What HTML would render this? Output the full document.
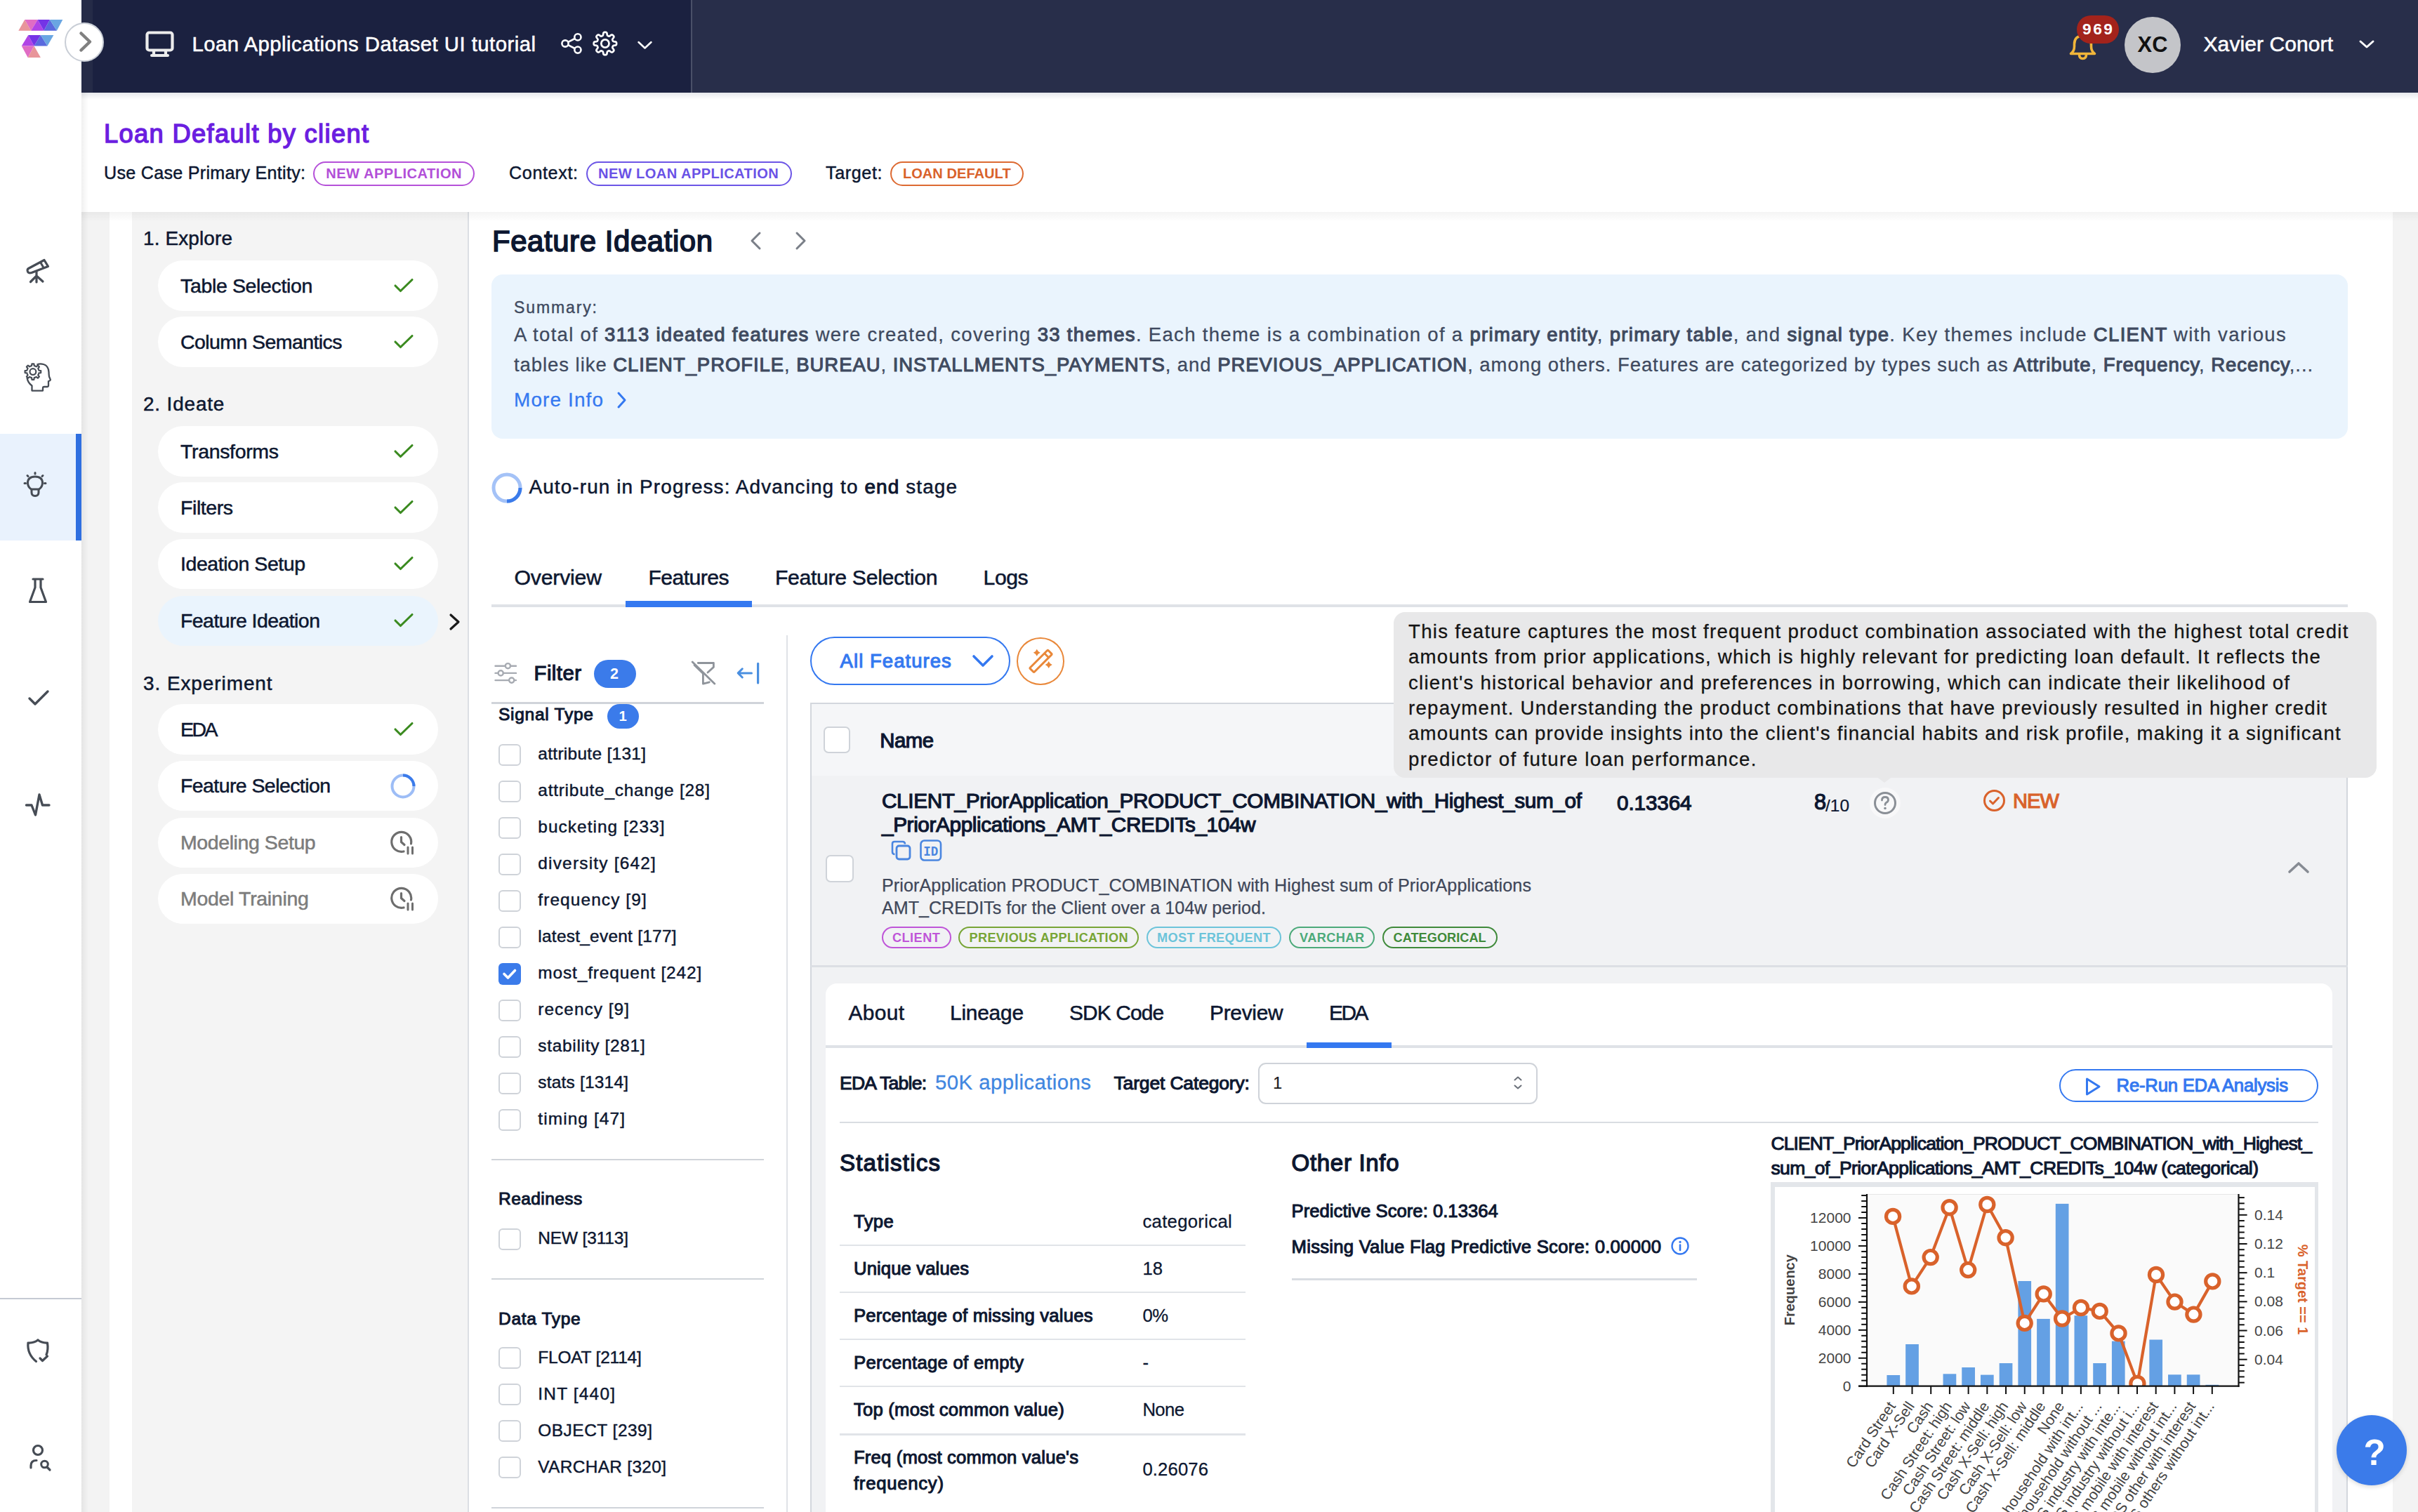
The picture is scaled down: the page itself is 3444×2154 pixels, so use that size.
<!DOCTYPE html><html><head><meta charset="utf-8"><style>
*{margin:0;padding:0}
html,body{width:3444px;height:2154px;overflow:hidden;background:#f3f3f3}
body{position:relative;font-family:"Liberation Sans",sans-serif}
.a{position:absolute}
.t{position:absolute;white-space:nowrap;line-height:1em}
b{font-weight:400;-webkit-text-stroke:1.1px currentColor}
</style></head><body>
<div class="a" style="left:0.0px;top:0.0px;width:3444.0px;height:2154.0px;background:#f3f3f3;"></div>
<div class="a" style="left:0.0px;top:0.0px;width:116.0px;height:2154.0px;background:#fff;"></div>
<div class="a" style="left:116.0px;top:0.0px;width:3328.0px;height:132.0px;background:#282e4a;"></div>
<div class="a" style="left:116.0px;top:0.0px;width:868.0px;height:132.0px;background:#1b2140;"></div>
<div class="a" style="left:116.0px;top:0.0px;width:16.0px;height:132.0px;background:#252b47;"></div>
<div class="a" style="left:984.0px;top:0.0px;width:2.0px;height:132.0px;background:#4a5068;"></div>
<div class="a" style="left:116.0px;top:132.0px;width:3328.0px;height:170.0px;background:#fff;"></div>
<div class="a" style="left:116.0px;top:132.0px;width:3328.0px;height:10.0px;background:linear-gradient(#e6e8ec,#ffffff);"></div>
<div class="a" style="left:156.0px;top:302.0px;width:3252.0px;height:1852.0px;background:#fff;"></div>
<div class="a" style="left:188.0px;top:302.0px;width:479.0px;height:1852.0px;background:#f4f4f4;"></div>
<div class="a" style="left:666.0px;top:302.0px;width:2.0px;height:1852.0px;background:#dcdfe4;"></div>
<div class="a" style="left:116.0px;top:302.0px;width:3328.0px;height:14.0px;background:linear-gradient(rgba(0,0,0,0.045),rgba(0,0,0,0));"></div>
<div class="a" style="left:116.0px;top:132.0px;width:10.0px;height:2022.0px;background:linear-gradient(90deg,rgba(0,0,0,0.06),rgba(0,0,0,0));"></div>
<svg class="a" style="left:0;top:0" width="116" height="110" viewBox="0 0 116 110">
<polygon points="26.3,43.7 35.2,28.1 44.2,43.7" fill="#e8959a"/>
<polygon points="35.2,28.1 53.6,28.1 44.2,43.7" fill="#e06cc4"/>
<polygon points="44.2,43.7 53.6,28.1 62.5,43.7" fill="#b044e6"/>
<polygon points="53.6,28.1 71,28.1 62.5,43.7" fill="#7434e6"/>
<polygon points="62.5,43.7 71,28.1 80.9,43.7" fill="#5a6ade"/>
<polygon points="71,28.1 89.3,28.1 80.9,43.7" fill="#6aa6e2"/>
<polygon points="30.8,65.5 40.2,50.1 48.6,65.5" fill="#b044e6"/>
<polygon points="40.2,50.1 58,50.1 48.6,65.5" fill="#7434e6"/>
<polygon points="48.6,65.5 58,50.1 67.5,65.5" fill="#5a6ade"/>
<polygon points="58,50.1 76.4,50.1 67.5,65.5" fill="#6aa6e2"/>
<polygon points="30.8,65.5 48.6,65.5 39.7,81.9" fill="#e06cc4"/>
<polygon points="48.6,65.5 57.9,81.9 39.7,81.9" fill="#e8959a"/>
</svg>
<div class="a" style="left:92px;top:32px;width:52px;height:52px;border-radius:50%;background:#fff;border:2px solid #c9ced6;"></div>
<svg class="a" style="left:108px;top:44px" width="30" height="32" viewBox="0 0 30 32"><path d="M7.5 3.5 L20 15.5 L7.5 27.5" fill="none" stroke="#808080" stroke-width="4.5" stroke-linecap="round" stroke-linejoin="round"/></svg>
<svg class="a" style="left:206px;top:43px" width="44" height="40" viewBox="0 0 44 40"><rect x="3.5" y="3.5" width="36" height="25" rx="3" fill="none" stroke="#ececec" stroke-width="4.2"/><path d="M13 29 v6 M30 29 v6" stroke="#ececec" stroke-width="4.2"/><path d="M10 36 h23" stroke="#ececec" stroke-width="4" stroke-linecap="round"/></svg>
<div class="t" id="t1" style="left:273.4px;top:48.4px;font-size:29.33px;font-weight:400;color:#ffffff;-webkit-text-stroke:0.53px currentColor;letter-spacing:0.467px;">Loan Applications Dataset UI tutorial</div>
<svg class="a" style="left:790px;top:40px" width="100" height="45" viewBox="790 40 100 45">
<circle cx="822.9" cy="52.9" r="4.6" fill="none" stroke="#fff" stroke-width="2.6"/><circle cx="805" cy="62" r="4.6" fill="none" stroke="#fff" stroke-width="2.6"/><circle cx="822.9" cy="71.1" r="4.6" fill="none" stroke="#fff" stroke-width="2.6"/>
<path d="M809.2 59.8 L818.7 55 M809.2 64.2 L818.7 69" stroke="#fff" stroke-width="2.6"/>
<path d="M861.90 45.80 L862.54 45.83 L863.17 45.92 L863.77 46.18 L864.29 46.89 L864.61 48.37 L864.82 49.84 L865.12 50.57 L865.51 50.90 L865.92 51.10 L866.34 51.28 L866.76 51.45 L867.20 51.60 L867.70 51.64 L868.43 51.34 L869.62 50.44 L870.89 49.63 L871.76 49.49 L872.37 49.74 L872.89 50.11 L873.36 50.54 L873.79 51.01 L874.16 51.53 L874.41 52.14 L874.27 53.01 L873.46 54.28 L872.56 55.47 L872.26 56.20 L872.30 56.70 L872.45 57.14 L872.62 57.56 L872.80 57.98 L873.00 58.39 L873.33 58.78 L874.06 59.08 L875.53 59.29 L877.01 59.61 L877.72 60.13 L877.98 60.73 L878.07 61.36 L878.10 62.00 L878.07 62.64 L877.98 63.27 L877.72 63.87 L877.01 64.39 L875.53 64.71 L874.06 64.92 L873.33 65.22 L873.00 65.61 L872.80 66.02 L872.62 66.44 L872.45 66.86 L872.30 67.30 L872.26 67.80 L872.56 68.53 L873.46 69.72 L874.27 70.99 L874.41 71.86 L874.16 72.47 L873.79 72.99 L873.36 73.46 L872.89 73.89 L872.37 74.26 L871.76 74.51 L870.89 74.37 L869.62 73.56 L868.43 72.66 L867.70 72.36 L867.20 72.40 L866.76 72.55 L866.34 72.72 L865.92 72.90 L865.51 73.10 L865.12 73.43 L864.82 74.16 L864.61 75.63 L864.29 77.11 L863.77 77.82 L863.17 78.08 L862.54 78.17 L861.90 78.20 L861.26 78.17 L860.63 78.08 L860.03 77.82 L859.51 77.11 L859.19 75.63 L858.98 74.16 L858.68 73.43 L858.29 73.10 L857.88 72.90 L857.46 72.72 L857.04 72.55 L856.60 72.40 L856.10 72.36 L855.37 72.66 L854.18 73.56 L852.91 74.37 L852.04 74.51 L851.43 74.26 L850.91 73.89 L850.44 73.46 L850.01 72.99 L849.64 72.47 L849.39 71.86 L849.53 70.99 L850.34 69.72 L851.24 68.53 L851.54 67.80 L851.50 67.30 L851.35 66.86 L851.18 66.44 L851.00 66.02 L850.80 65.61 L850.47 65.22 L849.74 64.92 L848.27 64.71 L846.79 64.39 L846.08 63.87 L845.82 63.27 L845.73 62.64 L845.70 62.00 L845.73 61.36 L845.82 60.73 L846.08 60.13 L846.79 59.61 L848.27 59.29 L849.74 59.08 L850.47 58.78 L850.80 58.39 L851.00 57.98 L851.18 57.56 L851.35 57.14 L851.50 56.70 L851.54 56.20 L851.24 55.47 L850.34 54.28 L849.53 53.01 L849.39 52.14 L849.64 51.53 L850.01 51.01 L850.44 50.54 L850.91 50.11 L851.43 49.74 L852.04 49.49 L852.91 49.63 L854.18 50.44 L855.37 51.34 L856.10 51.64 L856.60 51.60 L857.04 51.45 L857.46 51.28 L857.88 51.10 L858.29 50.90 L858.68 50.57 L858.98 49.84 L859.19 48.37 L859.51 46.89 L860.03 46.18 L860.63 45.92 L861.26 45.83 L861.90 45.80 Z" fill="none" stroke="#fff" stroke-width="2.7" stroke-linejoin="round"/>
<circle cx="861.9" cy="62" r="5.6" fill="none" stroke="#fff" stroke-width="2.7"/></svg>
<svg class="a" style="left:905px;top:55px" width="26" height="18" viewBox="0 0 26 18"><path d="M4.5 5 L13.5 13.5 L22.5 5" fill="none" stroke="#fff" stroke-width="2.5" stroke-linecap="round" stroke-linejoin="round"/></svg>
<svg class="a" style="left:2945px;top:46px" width="42" height="42" viewBox="0 0 42 42">
<path d="M4.5 30.5 Q9.5 27 9.5 20 V17 Q9.5 5 21.5 5 Q33.5 5 33.5 17 V20 Q33.5 27 38.5 30.5 Z" fill="none" stroke="#f0b53a" stroke-width="3.6" stroke-linejoin="round"/>
<path d="M16.5 31.5 Q16.5 37.5 21.5 37.5 Q26.5 37.5 26.5 31.5" fill="none" stroke="#f0b53a" stroke-width="3.6"/></svg>
<div class="a" style="left:2958px;top:22px;width:60px;height:40px;border-radius:20px;background:#a3231b;"></div>
<div class="t" id="t2" style="left:2966.0px;top:30.2px;font-size:22.77px;font-weight:700;color:#fff;letter-spacing:2.508px;">969</div>
<div class="a" style="left:3026px;top:24px;width:80px;height:80px;border-radius:50%;background:#c4c5c9;"></div>
<div class="t" id="t3" style="left:3044.5px;top:48.5px;font-size:30.73px;font-weight:700;color:#111;letter-spacing:0.312px;">XC</div>
<div class="t" id="t4" style="left:3138.5px;top:48.4px;font-size:30.03px;font-weight:400;color:#fff;-webkit-text-stroke:0.54px currentColor;letter-spacing:0.082px;">Xavier Conort</div>
<svg class="a" style="left:3358px;top:53px" width="26" height="20" viewBox="0 0 26 20"><path d="M4 6 L13 14 L22 6" fill="none" stroke="#fff" stroke-width="3" stroke-linecap="round" stroke-linejoin="round"/></svg>
<div class="t" id="t5" style="left:148.0px;top:173.3px;font-size:36.31px;font-weight:400;color:#6b1ee0;-webkit-text-stroke:1.45px currentColor;letter-spacing:1.330px;">Loan Default by client</div>
<div class="t" id="t6" style="left:148.0px;top:234.3px;font-size:25.14px;font-weight:400;color:#0d1730;-webkit-text-stroke:0.45px currentColor;letter-spacing:0.276px;">Use Case Primary Entity:</div>
<div class="a" style="left:446px;top:229.5px;width:230px;height:35px;box-sizing:border-box;border-radius:18px;border:2.5px solid #b551d9;"></div>
<div class="t" id="t7" style="left:464.2px;top:237.2px;font-size:20.11px;font-weight:700;color:#b24fd8;letter-spacing:0.488px;">NEW APPLICATION</div>
<div class="t" id="t8" style="left:725.0px;top:234.3px;font-size:25.14px;font-weight:400;color:#0d1730;-webkit-text-stroke:0.45px currentColor;letter-spacing:0.632px;">Context:</div>
<div class="a" style="left:834.6px;top:229.5px;width:293px;height:35px;box-sizing:border-box;border-radius:18px;border:2.5px solid #6c55e6;"></div>
<div class="t" id="t9" style="left:852.0px;top:237.2px;font-size:20.11px;font-weight:700;color:#6a52e6;letter-spacing:0.404px;">NEW LOAN APPLICATION</div>
<div class="t" id="t10" style="left:1176.0px;top:234.3px;font-size:25.14px;font-weight:400;color:#0d1730;-webkit-text-stroke:0.45px currentColor;letter-spacing:0.615px;">Target:</div>
<div class="a" style="left:1268px;top:229.5px;width:190px;height:35px;box-sizing:border-box;border-radius:18px;border:2.5px solid #dd6a32;"></div>
<div class="t" id="t11" style="left:1285.9px;top:237.2px;font-size:20.11px;font-weight:700;color:#d9622b;">LOAN DEFAULT</div>
<div class="a" style="left:0.0px;top:618.0px;width:116.0px;height:152.0px;background:#e9f2fd;"></div>
<div class="a" style="left:108.0px;top:618.0px;width:8.0px;height:152.0px;background:#2f6fe0;"></div>
<svg class="a" style="left:34px;top:366px" width="40" height="40" viewBox="0 0 40 40">
<path d="M6.5 16.5 L29 4.5 L34.5 13.5 L11 22.5 Q6 24 5.2 20 Q4.8 17.5 6.5 16.5 Z" fill="none" stroke="#464c55" stroke-width="3.2" stroke-linejoin="round"/>
<path d="M23.5 7.5 L28.5 16" stroke="#464c55" stroke-width="3"/>
<path d="M18 21 L18 36 M18 27 L9.5 35.5 M18 27 L27 35" stroke="#464c55" stroke-width="3.2" stroke-linecap="round"/></svg>
<svg class="a" style="left:30px;top:512px" width="48" height="50" viewBox="0 0 48 50">
<path d="M8.5 26 Q9.5 33 15.5 37.5 V44.6 H31 V41 Q31 39 33 39 H37 Q39 39 39 37 V31 L40.5 30.5 Q42.5 29.5 41.5 28 L40 24.5 Q39.5 21 39.5 18 Q39 9 32 7 Q27 5.5 22.5 7.5" fill="none" stroke="#464c55" stroke-width="2.3" stroke-linejoin="round"/>
<path d="M25.40 15.74 L28.20 16.13 L28.20 19.07 L25.40 19.46 L24.94 20.93 L24.23 22.29 L25.94 24.55 L23.85 26.64 L21.59 24.93 L20.23 25.64 L18.76 26.10 L18.37 28.90 L15.43 28.90 L15.04 26.10 L13.57 25.64 L12.21 24.93 L9.95 26.64 L7.86 24.55 L9.57 22.29 L8.86 20.93 L8.40 19.46 L5.60 19.07 L5.60 16.13 L8.40 15.74 L8.86 14.27 L9.57 12.91 L7.86 10.65 L9.95 8.56 L12.21 10.27 L13.57 9.56 L15.04 9.10 L15.43 6.30 L18.37 6.30 L18.76 9.10 L20.23 9.56 L21.59 10.27 L23.85 8.56 L25.94 10.65 L24.23 12.91 L24.94 14.27 Z" fill="#fff" stroke="#464c55" stroke-width="2.2" stroke-linejoin="round"/>
<circle cx="16.9" cy="17.6" r="4.4" fill="none" stroke="#464c55" stroke-width="2.2"/></svg>
<svg class="a" style="left:30px;top:670px" width="40" height="40" viewBox="0 0 40 40">
<path d="M14.5 27 Q9.5 23.5 9.5 18 Q9.5 9 20 9 Q30.5 9 30.5 18 Q30.5 23.5 25.5 27 Z" fill="none" stroke="#464c55" stroke-width="3" stroke-linejoin="round"/>
<path d="M15 28 V31.5 Q15 36.5 20 36.5 Q25 36.5 25 31.5 V28" fill="none" stroke="#464c55" stroke-width="3" stroke-linejoin="round"/>
<path d="M20 3.5 V5 M9 7.5 L10 8.5 M31 7.5 L30 8.5 M5 18.5 H6.5 M33.5 18.5 H35" stroke="#464c55" stroke-width="3" stroke-linecap="round"/></svg>
<svg class="a" style="left:38px;top:822px" width="32" height="40" viewBox="0 0 32 40">
<path d="M9 3 H23 M12 3 V15 L4.5 35.5 H27.5 L20 15 V3" fill="none" stroke="#464c55" stroke-width="3.2" stroke-linejoin="round" stroke-linecap="round"/></svg>
<svg class="a" style="left:38px;top:980px" width="34" height="28" viewBox="0 0 34 28"><path d="M4 15 L12 23 L30 5" fill="none" stroke="#464c55" stroke-width="3.4" stroke-linecap="round" stroke-linejoin="round"/></svg>
<svg class="a" style="left:35px;top:1128px" width="38" height="38" viewBox="0 0 38 38"><path d="M2.5 19 H10 L15.5 33 L21 4 L25.5 19 H35" fill="none" stroke="#464c55" stroke-width="3.4" stroke-linecap="round" stroke-linejoin="round"/></svg>
<div class="a" style="left:0.0px;top:1849.0px;width:116.0px;height:2.0px;background:#c5cad3;"></div>
<svg class="a" style="left:35px;top:1905px" width="38" height="40" viewBox="0 0 38 40">
<path d="M19 4 Q25 8.5 32.5 8 Q34 18 31 25 M19 4 Q13 8.5 5 8 Q3.5 24 16.5 34.5" fill="none" stroke="#464c55" stroke-width="3.2" stroke-linecap="round" stroke-linejoin="round"/>
<path d="M22 30 L25.5 33.5 L32.5 27" fill="none" stroke="#464c55" stroke-width="3.2" stroke-linecap="round" stroke-linejoin="round"/></svg>
<svg class="a" style="left:40px;top:2056px" width="36" height="42" viewBox="0 0 36 42">
<circle cx="14" cy="10" r="6.5" fill="none" stroke="#464c55" stroke-width="3.2"/>
<path d="M4 35 V32 Q4 24.5 12 24.5" fill="none" stroke="#464c55" stroke-width="3.2" stroke-linecap="round"/>
<circle cx="23.5" cy="30" r="4.8" fill="none" stroke="#464c55" stroke-width="3"/><path d="M27 34 L31 38" stroke="#464c55" stroke-width="3.2" stroke-linecap="round"/></svg>
<div class="t" id="t12" style="left:204.0px;top:326.4px;font-size:27.93px;font-weight:400;color:#0d1730;-webkit-text-stroke:0.50px currentColor;letter-spacing:0.142px;">1. Explore</div>
<div class="a" style="left:224.5px;top:370.8px;width:399.1px;height:71.8px;background:#fff;border-radius:36px;"></div>
<div class="t" id="t13" style="left:257.0px;top:392.6px;font-size:28.49px;font-weight:400;color:#0d1730;-webkit-text-stroke:0.51px currentColor;letter-spacing:-0.342px;">Table Selection</div>
<svg class="a" style="left:560px;top:393.70000000000005px" width="30" height="26" viewBox="0 0 30 26"><path d="M3 13 L10.5 20.5 L27 4.5" fill="none" stroke="#3a8a1f" stroke-width="3.1" stroke-linecap="round" stroke-linejoin="round"/></svg>
<div class="a" style="left:224.5px;top:451.0px;width:399.1px;height:72.0px;background:#fff;border-radius:36px;"></div>
<div class="t" id="t14" style="left:257.0px;top:472.9px;font-size:28.49px;font-weight:400;color:#0d1730;-webkit-text-stroke:0.51px currentColor;letter-spacing:-0.570px;">Column Semantics</div>
<svg class="a" style="left:560px;top:474.0px" width="30" height="26" viewBox="0 0 30 26"><path d="M3 13 L10.5 20.5 L27 4.5" fill="none" stroke="#3a8a1f" stroke-width="3.1" stroke-linecap="round" stroke-linejoin="round"/></svg>
<div class="t" id="t15" style="left:204.0px;top:562.4px;font-size:27.93px;font-weight:400;color:#0d1730;-webkit-text-stroke:0.50px currentColor;letter-spacing:0.839px;">2. Ideate</div>
<div class="a" style="left:224.5px;top:607.0px;width:399.1px;height:72.0px;background:#fff;border-radius:36px;"></div>
<div class="t" id="t16" style="left:257.0px;top:628.9px;font-size:28.49px;font-weight:400;color:#0d1730;-webkit-text-stroke:0.51px currentColor;letter-spacing:-0.330px;">Transforms</div>
<svg class="a" style="left:560px;top:630.0px" width="30" height="26" viewBox="0 0 30 26"><path d="M3 13 L10.5 20.5 L27 4.5" fill="none" stroke="#3a8a1f" stroke-width="3.1" stroke-linecap="round" stroke-linejoin="round"/></svg>
<div class="a" style="left:224.5px;top:687.0px;width:399.1px;height:72.0px;background:#fff;border-radius:36px;"></div>
<div class="t" id="t17" style="left:257.0px;top:708.9px;font-size:28.49px;font-weight:400;color:#0d1730;-webkit-text-stroke:0.51px currentColor;letter-spacing:-0.424px;">Filters</div>
<svg class="a" style="left:560px;top:710.0px" width="30" height="26" viewBox="0 0 30 26"><path d="M3 13 L10.5 20.5 L27 4.5" fill="none" stroke="#3a8a1f" stroke-width="3.1" stroke-linecap="round" stroke-linejoin="round"/></svg>
<div class="a" style="left:224.5px;top:767.6px;width:399.1px;height:71.4px;background:#fff;border-radius:36px;"></div>
<div class="t" id="t18" style="left:257.0px;top:789.2px;font-size:28.49px;font-weight:400;color:#0d1730;-webkit-text-stroke:0.51px currentColor;letter-spacing:-0.440px;">Ideation Setup</div>
<svg class="a" style="left:560px;top:790.3px" width="30" height="26" viewBox="0 0 30 26"><path d="M3 13 L10.5 20.5 L27 4.5" fill="none" stroke="#3a8a1f" stroke-width="3.1" stroke-linecap="round" stroke-linejoin="round"/></svg>
<div class="a" style="left:224.5px;top:848.6px;width:399.1px;height:71.4px;background:#eaf4fd;border-radius:36px;"></div>
<div class="t" id="t19" style="left:257.0px;top:870.2px;font-size:28.49px;font-weight:400;color:#0d1730;-webkit-text-stroke:0.51px currentColor;letter-spacing:-0.564px;">Feature Ideation</div>
<svg class="a" style="left:560px;top:871.3px" width="30" height="26" viewBox="0 0 30 26"><path d="M3 13 L10.5 20.5 L27 4.5" fill="none" stroke="#3a8a1f" stroke-width="3.1" stroke-linecap="round" stroke-linejoin="round"/></svg>
<svg class="a" style="left:636px;top:872px" width="24" height="28" viewBox="0 0 24 28"><path d="M6 4 L17 14 L6 24" fill="none" stroke="#1a1a1a" stroke-width="3.2" stroke-linecap="round" stroke-linejoin="round"/></svg>
<div class="t" id="t20" style="left:204.0px;top:959.7px;font-size:27.93px;font-weight:400;color:#0d1730;-webkit-text-stroke:0.50px currentColor;letter-spacing:0.945px;">3. Experiment</div>
<div class="a" style="left:224.5px;top:1003.0px;width:399.1px;height:72.0px;background:#fff;border-radius:36px;"></div>
<div class="t" id="t21" style="left:257.0px;top:1024.9px;font-size:28.49px;font-weight:400;color:#0d1730;-webkit-text-stroke:0.51px currentColor;letter-spacing:-2.500px;">EDA</div>
<svg class="a" style="left:560px;top:1026.0px" width="30" height="26" viewBox="0 0 30 26"><path d="M3 13 L10.5 20.5 L27 4.5" fill="none" stroke="#3a8a1f" stroke-width="3.1" stroke-linecap="round" stroke-linejoin="round"/></svg>
<div class="a" style="left:224.5px;top:1084.0px;width:399.1px;height:71.0px;background:#fff;border-radius:36px;"></div>
<div class="t" id="t22" style="left:257.0px;top:1105.4px;font-size:28.49px;font-weight:400;color:#0d1730;-webkit-text-stroke:0.51px currentColor;letter-spacing:-0.579px;">Feature Selection</div>
<svg class="a" style="left:554px;top:1099.5px" width="40" height="40" viewBox="0 0 40 40"><circle cx="20" cy="20" r="15.5" fill="none" stroke="#9dbdf6" stroke-width="4"/><path d="M20 4.5 A15.5 15.5 0 0 1 35.5 20" fill="none" stroke="#3b7bea" stroke-width="4"/></svg>
<div class="a" style="left:224.5px;top:1164.5px;width:399.1px;height:71.1px;background:#fff;border-radius:36px;"></div>
<div class="t" id="t23" style="left:257.0px;top:1185.9px;font-size:28.49px;font-weight:400;color:#7c7c7c;-webkit-text-stroke:0.51px currentColor;letter-spacing:-0.404px;">Modeling Setup</div>
<svg class="a" style="left:554px;top:1180.0px" width="40" height="40" viewBox="0 0 40 40">
<path d="M31.5 22 A14 14 0 1 0 21 33" fill="none" stroke="#6e6e6e" stroke-width="3.2" stroke-linecap="round"/>
<path d="M17.5 12.5 V19.5 L22 23.5" fill="none" stroke="#6e6e6e" stroke-width="3.2" stroke-linecap="round" stroke-linejoin="round"/>
<path d="M27 27 V36 M33.5 27 V36" stroke="#6e6e6e" stroke-width="3" stroke-linecap="round"/></svg>
<div class="a" style="left:224.5px;top:1244.6px;width:399.1px;height:71.4px;background:#fff;border-radius:36px;"></div>
<div class="t" id="t24" style="left:257.0px;top:1266.2px;font-size:28.49px;font-weight:400;color:#7c7c7c;-webkit-text-stroke:0.51px currentColor;letter-spacing:-0.311px;">Model Training</div>
<svg class="a" style="left:554px;top:1260.3px" width="40" height="40" viewBox="0 0 40 40">
<path d="M31.5 22 A14 14 0 1 0 21 33" fill="none" stroke="#6e6e6e" stroke-width="3.2" stroke-linecap="round"/>
<path d="M17.5 12.5 V19.5 L22 23.5" fill="none" stroke="#6e6e6e" stroke-width="3.2" stroke-linecap="round" stroke-linejoin="round"/>
<path d="M27 27 V36 M33.5 27 V36" stroke="#6e6e6e" stroke-width="3" stroke-linecap="round"/></svg>
<div class="t" id="t25" style="left:701.0px;top:322.5px;font-size:41.90px;font-weight:400;color:#0d1730;-webkit-text-stroke:1.68px currentColor;letter-spacing:0.595px;">Feature Ideation</div>
<svg class="a" style="left:1066px;top:329px" width="22" height="28" viewBox="0 0 22 28"><path d="M16 3 L5 14 L16 25" fill="none" stroke="#7a7f88" stroke-width="3" stroke-linecap="round" stroke-linejoin="round"/></svg>
<svg class="a" style="left:1129px;top:329px" width="22" height="28" viewBox="0 0 22 28"><path d="M6 3 L17 14 L6 25" fill="none" stroke="#7a7f88" stroke-width="3" stroke-linecap="round" stroke-linejoin="round"/></svg>
<div class="a" style="left:699.7px;top:390.6px;width:2644.3px;height:234.4px;background:#eaf4fd;border-radius:16px;"></div>
<div class="t" id="t26" style="left:732.0px;top:427.0px;font-size:23.04px;font-weight:400;color:#3f4a5f;-webkit-text-stroke:0.41px currentColor;letter-spacing:1.866px;">Summary:</div>
<div class="t" id="t27" style="left:732.0px;top:462.7px;font-size:27.51px;font-weight:400;color:#3f4a5f;-webkit-text-stroke:0.28px currentColor;letter-spacing:1.313px;">A total of <b>3113 ideated features</b> were created, covering <b>33 themes</b>. Each theme is a combination of a <b>primary entity</b>, <b>primary table</b>, and <b>signal type</b>. Key themes include <b>CLIENT</b> with various</div>
<div class="t" id="t28" style="left:732.0px;top:506.4px;font-size:27.51px;font-weight:400;color:#3f4a5f;-webkit-text-stroke:0.28px currentColor;letter-spacing:0.939px;">tables like <b>CLIENT_PROFILE</b>, <b>BUREAU</b>, <b>INSTALLMENTS_PAYMENTS</b>, and <b>PREVIOUS_APPLICATION</b>, among others. Features are categorized by types such as <b>Attribute</b>, <b>Frequency</b>, <b>Recency</b>,...</div>
<div class="t" id="t29" style="left:732.0px;top:556.2px;font-size:27.93px;font-weight:400;color:#3478f0;-webkit-text-stroke:0.28px currentColor;letter-spacing:1.131px;">More Info</div>
<svg class="a" style="left:874px;top:556px" width="22" height="28" viewBox="0 0 22 28"><path d="M7 4 L16 14 L7 24" fill="none" stroke="#3478f0" stroke-width="3" stroke-linecap="round" stroke-linejoin="round"/></svg>
<svg class="a" style="left:699px;top:672px" width="46" height="46" viewBox="0 0 46 46"><circle cx="23" cy="23" r="19" fill="none" stroke="#a4c2f7" stroke-width="5"/><path d="M42 23 A19 19 0 0 1 23 42" fill="none" stroke="#3b7bea" stroke-width="5"/></svg>
<div class="t" id="t30" style="left:753.5px;top:680.4px;font-size:27.93px;font-weight:400;color:#0d1730;-webkit-text-stroke:0.50px currentColor;letter-spacing:1.106px;">Auto-run in Progress: Advancing to <b style="-webkit-text-stroke:1px currentColor">end</b> stage</div>
<div class="a" style="left:699.8px;top:861.0px;width:2644.2px;height:4.0px;background:#dfe2e7;"></div>
<div class="a" style="left:890.7px;top:856.0px;width:180.2px;height:9.0px;background:#3478f0;"></div>
<div class="t" id="t31" style="left:732.6px;top:808.2px;font-size:30.17px;font-weight:400;color:#0d1730;-webkit-text-stroke:0.54px currentColor;letter-spacing:-0.184px;">Overview</div>
<div class="t" id="t32" style="left:923.5px;top:808.2px;font-size:30.17px;font-weight:400;color:#0d1730;-webkit-text-stroke:0.54px currentColor;letter-spacing:-0.574px;">Features</div>
<div class="t" id="t33" style="left:1104.0px;top:808.2px;font-size:30.17px;font-weight:400;color:#0d1730;-webkit-text-stroke:0.54px currentColor;letter-spacing:-0.305px;">Feature Selection</div>
<div class="t" id="t34" style="left:1400.6px;top:808.2px;font-size:30.17px;font-weight:400;color:#0d1730;-webkit-text-stroke:0.54px currentColor;letter-spacing:-0.469px;">Logs</div>
<svg class="a" style="left:690px;top:930px" width="60" height="50" viewBox="690 930 60 50">
<path d="M705.5 948.7 H735 M705.5 958.9 H735 M705.5 969.1 H735" stroke="#a7abb2" stroke-width="2.4" stroke-linecap="round"/>
<circle cx="723.4" cy="948.7" r="3.6" fill="#fff" stroke="#a7abb2" stroke-width="2.4"/><circle cx="713.2" cy="958.9" r="3.6" fill="#fff" stroke="#a7abb2" stroke-width="2.4"/><circle cx="728.7" cy="969.1" r="3.6" fill="#fff" stroke="#a7abb2" stroke-width="2.4"/></svg>
<div class="t" id="t35" style="left:760.5px;top:943.6px;font-size:29.33px;font-weight:400;color:#0d1730;-webkit-text-stroke:1.17px currentColor;letter-spacing:0.463px;">Filter</div>
<div class="a" style="left:846.0px;top:940.0px;width:60.4px;height:39.6px;background:#3b7bea;border-radius:20px;"></div>
<div class="t" id="t36" style="left:869.0px;top:950.0px;font-size:21.51px;font-weight:700;color:#fff;">2</div>
<svg class="a" style="left:980px;top:935px" width="110" height="45" viewBox="980 935 110 45">
<path d="M994.3 944.5 H1016.4 V950.4 L1008 958" fill="none" stroke="#8f949b" stroke-width="2.8" stroke-linejoin="round" stroke-linecap="round"/>
<path d="M989 947.5 L1001.4 959.5 V974.2 L1010.3 971.8" fill="none" stroke="#8f949b" stroke-width="2.8" stroke-linejoin="round" stroke-linecap="round"/>
<path d="M986.2 943 L1017.8 974" stroke="#8f949b" stroke-width="2.8" stroke-linecap="round"/>
<path d="M1051.5 958.9 H1070.5 M1057.3 952.8 L1051.2 958.9 L1057.3 965" fill="none" stroke="#4a8fe0" stroke-width="3" stroke-linecap="round" stroke-linejoin="round"/>
<path d="M1079.6 945.3 V973" stroke="#4a8fe0" stroke-width="3.2" stroke-linecap="round"/></svg>
<div class="a" style="left:700.0px;top:1000.0px;width:388.0px;height:2.5px;background:#d0d4da;"></div>
<div class="a" style="left:1119.8px;top:905.0px;width:2.0px;height:1249.0px;background:#dfe2e7;"></div>
<div class="t" id="t37" style="left:710.0px;top:1006.2px;font-size:24.58px;font-weight:400;color:#0d1730;-webkit-text-stroke:0.98px currentColor;letter-spacing:0.700px;">Signal Type</div>
<div class="a" style="left:864.7px;top:1002.6px;width:45.3px;height:35.8px;background:#3b7bea;border-radius:18px;"></div>
<div class="t" id="t38" style="left:881.5px;top:1010.4px;font-size:20.25px;font-weight:700;color:#fff;letter-spacing:-0.766px;">1</div>
<div class="a" style="left:710.4px;top:1059.5px;width:31.3px;height:31px;box-sizing:border-box;border-radius:6px;border:2px solid #cfd3d9;background:#fff;"></div>
<div class="t" id="t39" style="left:766.3px;top:1062.3px;font-size:24.44px;font-weight:400;color:#0d1730;-webkit-text-stroke:0.44px currentColor;letter-spacing:0.303px;">attribute [131]</div>
<div class="a" style="left:710.4px;top:1111.5px;width:31.3px;height:31px;box-sizing:border-box;border-radius:6px;border:2px solid #cfd3d9;background:#fff;"></div>
<div class="t" id="t40" style="left:766.3px;top:1114.3px;font-size:24.44px;font-weight:400;color:#0d1730;-webkit-text-stroke:0.44px currentColor;letter-spacing:0.754px;">attribute_change [28]</div>
<div class="a" style="left:710.4px;top:1163.5px;width:31.3px;height:31px;box-sizing:border-box;border-radius:6px;border:2px solid #cfd3d9;background:#fff;"></div>
<div class="t" id="t41" style="left:766.3px;top:1166.3px;font-size:24.44px;font-weight:400;color:#0d1730;-webkit-text-stroke:0.44px currentColor;letter-spacing:1.031px;">bucketing [233]</div>
<div class="a" style="left:710.4px;top:1215.5px;width:31.3px;height:31px;box-sizing:border-box;border-radius:6px;border:2px solid #cfd3d9;background:#fff;"></div>
<div class="t" id="t42" style="left:766.3px;top:1218.3px;font-size:24.44px;font-weight:400;color:#0d1730;-webkit-text-stroke:0.44px currentColor;letter-spacing:1.195px;">diversity [642]</div>
<div class="a" style="left:710.4px;top:1267.5px;width:31.3px;height:31px;box-sizing:border-box;border-radius:6px;border:2px solid #cfd3d9;background:#fff;"></div>
<div class="t" id="t43" style="left:766.3px;top:1270.3px;font-size:24.44px;font-weight:400;color:#0d1730;-webkit-text-stroke:0.44px currentColor;letter-spacing:1.093px;">frequency [9]</div>
<div class="a" style="left:710.4px;top:1319.5px;width:31.3px;height:31px;box-sizing:border-box;border-radius:6px;border:2px solid #cfd3d9;background:#fff;"></div>
<div class="t" id="t44" style="left:766.3px;top:1322.3px;font-size:24.44px;font-weight:400;color:#0d1730;-webkit-text-stroke:0.44px currentColor;letter-spacing:0.257px;">latest_event [177]</div>
<div class="a" style="left:710.4px;top:1371.5px;width:31.3px;height:31px;border-radius:6px;background:#3b7bea;"></div>
<svg class="a" style="left:710.4px;top:1371.5px" width="31" height="31" viewBox="0 0 31 31"><path d="M8 15.5 L13.5 21 L23.5 10.5" fill="none" stroke="#fff" stroke-width="3.6" stroke-linecap="round" stroke-linejoin="round"/></svg>
<div class="t" id="t45" style="left:766.3px;top:1374.3px;font-size:24.44px;font-weight:400;color:#0d1730;-webkit-text-stroke:0.44px currentColor;letter-spacing:0.868px;">most_frequent [242]</div>
<div class="a" style="left:710.4px;top:1423.5px;width:31.3px;height:31px;box-sizing:border-box;border-radius:6px;border:2px solid #cfd3d9;background:#fff;"></div>
<div class="t" id="t46" style="left:766.3px;top:1426.3px;font-size:24.44px;font-weight:400;color:#0d1730;-webkit-text-stroke:0.44px currentColor;letter-spacing:1.017px;">recency [9]</div>
<div class="a" style="left:710.4px;top:1475.5px;width:31.3px;height:31px;box-sizing:border-box;border-radius:6px;border:2px solid #cfd3d9;background:#fff;"></div>
<div class="t" id="t47" style="left:766.3px;top:1478.3px;font-size:24.44px;font-weight:400;color:#0d1730;-webkit-text-stroke:0.44px currentColor;letter-spacing:0.697px;">stability [281]</div>
<div class="a" style="left:710.4px;top:1527.5px;width:31.3px;height:31px;box-sizing:border-box;border-radius:6px;border:2px solid #cfd3d9;background:#fff;"></div>
<div class="t" id="t48" style="left:766.3px;top:1530.3px;font-size:24.44px;font-weight:400;color:#0d1730;-webkit-text-stroke:0.44px currentColor;letter-spacing:0.214px;">stats [1314]</div>
<div class="a" style="left:710.4px;top:1579.5px;width:31.3px;height:31px;box-sizing:border-box;border-radius:6px;border:2px solid #cfd3d9;background:#fff;"></div>
<div class="t" id="t49" style="left:766.3px;top:1582.3px;font-size:24.44px;font-weight:400;color:#0d1730;-webkit-text-stroke:0.44px currentColor;letter-spacing:1.095px;">timing [47]</div>
<div class="a" style="left:699.6px;top:1651.0px;width:388.4px;height:2.0px;background:#d0d4da;"></div>
<div class="t" id="t50" style="left:710.0px;top:1696.4px;font-size:24.58px;font-weight:400;color:#0d1730;-webkit-text-stroke:0.98px currentColor;letter-spacing:0.382px;">Readiness</div>
<div class="a" style="left:710.4px;top:1749.5px;width:31.3px;height:31px;box-sizing:border-box;border-radius:6px;border:2px solid #cfd3d9;background:#fff;"></div>
<div class="t" id="t51" style="left:766.3px;top:1752.3px;font-size:24.44px;font-weight:400;color:#0d1730;-webkit-text-stroke:0.44px currentColor;letter-spacing:-0.137px;">NEW [3113]</div>
<div class="a" style="left:699.6px;top:1820.6px;width:388.4px;height:2.0px;background:#d0d4da;"></div>
<div class="t" id="t52" style="left:710.0px;top:1866.7px;font-size:24.58px;font-weight:400;color:#0d1730;-webkit-text-stroke:0.98px currentColor;letter-spacing:0.638px;">Data Type</div>
<div class="a" style="left:710.4px;top:1919.4px;width:31.3px;height:31px;box-sizing:border-box;border-radius:6px;border:2px solid #cfd3d9;background:#fff;"></div>
<div class="t" id="t53" style="left:766.3px;top:1922.2px;font-size:24.44px;font-weight:400;color:#0d1730;-webkit-text-stroke:0.44px currentColor;letter-spacing:-0.175px;">FLOAT [2114]</div>
<div class="a" style="left:710.4px;top:1971.4px;width:31.3px;height:31px;box-sizing:border-box;border-radius:6px;border:2px solid #cfd3d9;background:#fff;"></div>
<div class="t" id="t54" style="left:766.3px;top:1974.2px;font-size:24.44px;font-weight:400;color:#0d1730;-webkit-text-stroke:0.44px currentColor;letter-spacing:1.203px;">INT [440]</div>
<div class="a" style="left:710.4px;top:2023.4px;width:31.3px;height:31px;box-sizing:border-box;border-radius:6px;border:2px solid #cfd3d9;background:#fff;"></div>
<div class="t" id="t55" style="left:766.3px;top:2026.2px;font-size:24.44px;font-weight:400;color:#0d1730;-webkit-text-stroke:0.44px currentColor;letter-spacing:0.508px;">OBJECT [239]</div>
<div class="a" style="left:710.4px;top:2075.4px;width:31.3px;height:31px;box-sizing:border-box;border-radius:6px;border:2px solid #cfd3d9;background:#fff;"></div>
<div class="t" id="t56" style="left:766.3px;top:2078.2px;font-size:24.44px;font-weight:400;color:#0d1730;-webkit-text-stroke:0.44px currentColor;letter-spacing:0.323px;">VARCHAR [320]</div>
<div class="a" style="left:699.6px;top:2146.6px;width:388.4px;height:2.0px;background:#d0d4da;"></div>
<div class="a" style="left:1154px;top:907px;width:285px;height:69px;box-sizing:border-box;border-radius:35px;border:2.5px solid #3478f0;"></div>
<div class="t" id="t57" style="left:1196.6px;top:928.4px;font-size:27.51px;font-weight:400;color:#3478f0;-webkit-text-stroke:1.10px currentColor;letter-spacing:1.042px;">All Features</div>
<svg class="a" style="left:1382px;top:929px" width="36" height="26" viewBox="0 0 36 26"><path d="M5 6 L18 19 L31 6" fill="none" stroke="#3478f0" stroke-width="3.6" stroke-linecap="round" stroke-linejoin="round"/></svg>
<div class="a" style="left:1448.4px;top:908.2px;width:67.2px;height:67.4px;box-sizing:border-box;border-radius:50%;border:2.2px solid #e9883a;"></div>
<svg class="a" style="left:1440px;top:900px" width="90" height="85" viewBox="1440 900 90 85">
<g transform="translate(1482.5 941.9) rotate(-45)"><rect x="-18.3" y="-4.3" width="36.6" height="8.6" rx="1.2" fill="none" stroke="#e9883a" stroke-width="3"/><path d="M11.5 -4.2 V4.2" stroke="#e9883a" stroke-width="3"/></g>
<path d="M1476.8 924.8 Q1478.1 928.5 1481.8 929.8 Q1478.1 931.0999999999999 1476.8 934.8 Q1475.5 931.0999999999999 1471.8 929.8 Q1475.5 928.5 1476.8 924.8 Z" fill="#e9883a"/><path d="M1493.7 942 Q1495.0 945.7 1498.7 947 Q1495.0 948.3 1493.7 952 Q1492.4 948.3 1488.7 947 Q1492.4 945.7 1493.7 942 Z" fill="#e9883a"/></svg>
<div class="a" style="left:1154.5px;top:1001.3px;width:2189.5px;height:1152.7px;background:#f1f2f4;"></div>
<div class="a" style="left:1154.5px;top:1001.3px;width:2189.5px;height:104.2px;background:#f5f6f8;"></div>
<div class="a" style="left:1154.5px;top:1000.5px;width:2189.5px;height:2.5px;background:#d3d7dd;"></div>
<div class="a" style="left:1153.5px;top:1001.3px;width:2.0px;height:1152.7px;background:#d3d7dd;"></div>
<div class="a" style="left:3342.0px;top:1001.3px;width:2.0px;height:1152.7px;background:#d3d7dd;"></div>
<div class="a" style="left:1172.5px;top:1034.8px;width:38.8px;height:38.2px;box-sizing:border-box;border-radius:7px;border:2px solid #cfd3d9;background:#fff;"></div>
<div class="t" id="t58" style="left:1253.3px;top:1039.6px;font-size:29.33px;font-weight:400;color:#0d1730;-webkit-text-stroke:1.17px currentColor;letter-spacing:-0.511px;">Name</div>
<div class="t" id="t59" style="left:1256.0px;top:1125.8px;font-size:29.75px;font-weight:400;color:#0d1730;-webkit-text-stroke:1.19px currentColor;letter-spacing:-0.364px;">CLIENT_PriorApplication_PRODUCT_COMBINATION_with_Highest_sum_of</div>
<div class="t" id="t60" style="left:1256.0px;top:1160.4px;font-size:29.75px;font-weight:400;color:#0d1730;-webkit-text-stroke:1.19px currentColor;letter-spacing:-0.384px;">_PriorApplications_AMT_CREDITs_104w</div>
<svg class="a" style="left:1268px;top:1196px" width="32" height="32" viewBox="0 0 32 32">
<path d="M6.5 21 Q3 21 3 17.5 V6 Q3 3 6 3 H17.5 Q21 3 21 6.5" fill="none" stroke="#4a86e0" stroke-width="2.6"/>
<rect x="9" y="9" width="19" height="19" rx="3.5" fill="none" stroke="#4a86e0" stroke-width="2.8"/></svg>
<svg class="a" style="left:1309px;top:1195px" width="34" height="33" viewBox="0 0 34 33">
<rect x="2.5" y="2.5" width="28.5" height="28" rx="5" fill="none" stroke="#4a86e0" stroke-width="2.6"/>
<text x="6.3" y="23.6" font-family="Liberation Mono" font-weight="700" font-size="21" textLength="21" lengthAdjust="spacingAndGlyphs" fill="#4a86e0">ID</text></svg>
<div class="a" style="left:1176px;top:1218px;width:39.6px;height:39px;box-sizing:border-box;border-radius:7px;border:2px solid #cfd3d9;background:#fff;"></div>
<div class="t" id="t61" style="left:1256.0px;top:1248.7px;font-size:25.14px;font-weight:400;color:#3f4759;-webkit-text-stroke:0.25px currentColor;letter-spacing:0.092px;">PriorApplication PRODUCT_COMBINATION with Highest sum of PriorApplications</div>
<div class="t" id="t62" style="left:1256.0px;top:1280.7px;font-size:25.14px;font-weight:400;color:#3f4759;-webkit-text-stroke:0.25px currentColor;letter-spacing:-0.009px;">AMT_CREDITs for the Client over a 104w period.</div>
<div class="a" style="left:1256px;top:1320.3px;width:98.5px;height:31.1px;box-sizing:border-box;border-radius:16px;border:2px solid #bf55d8;"></div>
<div class="t" id="t63" style="left:1271.0px;top:1326.6px;font-size:18.16px;font-weight:700;color:#bf55d8;letter-spacing:0.447px;">CLIENT</div>
<div class="a" style="left:1365px;top:1320.3px;width:257.0px;height:31.1px;box-sizing:border-box;border-radius:16px;border:2px solid #78a536;"></div>
<div class="t" id="t64" style="left:1380.6px;top:1326.6px;font-size:18.16px;font-weight:700;color:#78a536;letter-spacing:0.315px;">PREVIOUS APPLICATION</div>
<div class="a" style="left:1633px;top:1320.3px;width:192.0px;height:31.1px;box-sizing:border-box;border-radius:16px;border:2px solid #6cc4da;"></div>
<div class="t" id="t65" style="left:1648.0px;top:1326.6px;font-size:18.16px;font-weight:700;color:#6cc4da;letter-spacing:0.345px;">MOST FREQUENT</div>
<div class="a" style="left:1836px;top:1320.3px;width:122.0px;height:31.1px;box-sizing:border-box;border-radius:16px;border:2px solid #4caa7a;"></div>
<div class="t" id="t66" style="left:1851.0px;top:1326.6px;font-size:18.16px;font-weight:700;color:#4caa7a;letter-spacing:0.427px;">VARCHAR</div>
<div class="a" style="left:1969px;top:1320.3px;width:164.0px;height:31.1px;box-sizing:border-box;border-radius:16px;border:2px solid #3f8a3a;"></div>
<div class="t" id="t67" style="left:1984.5px;top:1326.6px;font-size:18.16px;font-weight:700;color:#3f8a3a;letter-spacing:0.040px;">CATEGORICAL</div>
<div class="t" id="t68" style="left:2303.0px;top:1128.9px;font-size:29.61px;font-weight:400;color:#0d1730;-webkit-text-stroke:1.18px currentColor;letter-spacing:-0.089px;">0.13364</div>
<div class="t" id="t69" style="left:2584.0px;top:1128.0px;font-size:30.73px;font-weight:400;color:#0d1730;-webkit-text-stroke:1.23px currentColor;">8</div>
<div class="t" id="t70" style="left:2600.0px;top:1136.3px;font-size:24.44px;font-weight:400;color:#0d1730;-webkit-text-stroke:0.24px currentColor;letter-spacing:0.008px;">/10</div>
<div class="a" style="left:2663px;top:1122px;width:44px;height:44px;border-radius:50%;background:#f8f8f9;"></div>
<svg class="a" style="left:2667px;top:1126px" width="36" height="36" viewBox="0 0 36 36"><circle cx="18" cy="18" r="14.5" fill="none" stroke="#8a8f96" stroke-width="3"/>
<path d="M13.5 14 Q13.5 9.5 18 9.5 Q22.5 9.5 22.5 13.5 Q22.5 16 19.5 17.5 Q18 18.5 18 20.5" fill="none" stroke="#8a8f96" stroke-width="2.8" stroke-linecap="round"/><circle cx="18" cy="25.5" r="1.8" fill="#8a8f96"/></svg>
<svg class="a" style="left:2823px;top:1123px" width="35" height="35" viewBox="0 0 35 35"><circle cx="17.5" cy="17.5" r="14" fill="none" stroke="#d9622b" stroke-width="3"/>
<path d="M11.5 18 L15.5 22 L23.5 13.5" fill="none" stroke="#d9622b" stroke-width="3" stroke-linecap="round" stroke-linejoin="round"/></svg>
<div class="t" id="t71" style="left:2867.0px;top:1127.0px;font-size:29.05px;font-weight:400;color:#d9622b;-webkit-text-stroke:1.16px currentColor;letter-spacing:-0.891px;">NEW</div>
<svg class="a" style="left:3256px;top:1222px" width="36" height="28" viewBox="0 0 36 28"><path d="M5 20 L18 8 L31 20" fill="none" stroke="#868b93" stroke-width="3.6" stroke-linecap="round" stroke-linejoin="round"/></svg>
<div class="a" style="left:1154.5px;top:1375.0px;width:2189.5px;height:2.5px;background:#dcdfe4;"></div>
<div class="a" style="left:1176.0px;top:1401.4px;width:2146.0px;height:752.6px;background:#fff;border-radius:16px 16px 0 0;"></div>
<div class="t" id="t72" style="left:1208.5px;top:1428.4px;font-size:29.89px;font-weight:400;color:#0d1730;-webkit-text-stroke:0.54px currentColor;letter-spacing:0.355px;">About</div>
<div class="t" id="t73" style="left:1353.0px;top:1428.4px;font-size:29.89px;font-weight:400;color:#0d1730;-webkit-text-stroke:0.54px currentColor;letter-spacing:-0.221px;">Lineage</div>
<div class="t" id="t74" style="left:1523.0px;top:1428.4px;font-size:29.89px;font-weight:400;color:#0d1730;-webkit-text-stroke:0.54px currentColor;letter-spacing:-0.879px;">SDK Code</div>
<div class="t" id="t75" style="left:1723.0px;top:1428.4px;font-size:29.89px;font-weight:400;color:#0d1730;-webkit-text-stroke:0.54px currentColor;letter-spacing:-0.278px;">Preview</div>
<div class="t" id="t76" style="left:1893.0px;top:1428.4px;font-size:29.89px;font-weight:400;color:#0d1730;-webkit-text-stroke:0.54px currentColor;letter-spacing:-2.500px;">EDA</div>
<div class="a" style="left:1176.0px;top:1489.4px;width:2146.0px;height:3.6px;background:#dfe2e7;"></div>
<div class="a" style="left:1861.0px;top:1484.6px;width:121.0px;height:8.4px;background:#3478f0;"></div>
<div class="t" id="t77" style="left:1196.0px;top:1529.5px;font-size:26.54px;font-weight:400;color:#0d1730;-webkit-text-stroke:1.06px currentColor;letter-spacing:-0.753px;">EDA Table:</div>
<div class="t" id="t78" style="left:1332.0px;top:1527.2px;font-size:29.33px;font-weight:400;color:#3f86e0;-webkit-text-stroke:0.29px currentColor;letter-spacing:0.451px;">50K applications</div>
<div class="t" id="t79" style="left:1586.5px;top:1529.5px;font-size:26.54px;font-weight:400;color:#0d1730;-webkit-text-stroke:1.06px currentColor;letter-spacing:-0.176px;">Target Category:</div>
<div class="a" style="left:1792px;top:1514px;width:398px;height:58.6px;box-sizing:border-box;border-radius:11px;border:2px solid #cfd3d9;background:#fff;"></div>
<div class="t" id="t80" style="left:1813.3px;top:1531.5px;font-size:23.04px;font-weight:400;color:#1a1a1a;-webkit-text-stroke:0.23px currentColor;">1</div>
<svg class="a" style="left:2152px;top:1531px" width="20" height="24" viewBox="0 0 20 24"><path d="M5.5 7.5 L10 3.5 L14.5 7.5 M5.5 15.5 L10 19.5 L14.5 15.5" fill="none" stroke="#6b7079" stroke-width="2" stroke-linecap="round" stroke-linejoin="round"/></svg>
<div class="a" style="left:2933px;top:1523.4px;width:369px;height:46.6px;box-sizing:border-box;border-radius:24px;border:2.5px solid #3478f0;"></div>
<svg class="a" style="left:2968px;top:1533px" width="26" height="30" viewBox="0 0 26 30"><path d="M4.5 4 L22 15 L4.5 26 Z" fill="none" stroke="#3478f0" stroke-width="3" stroke-linejoin="round"/></svg>
<div class="t" id="t81" style="left:3014.6px;top:1534.2px;font-size:25.70px;font-weight:400;color:#3478f0;-webkit-text-stroke:1.03px currentColor;letter-spacing:-0.223px;">Re-Run EDA Analysis</div>
<div class="a" style="left:1196.0px;top:1597.6px;width:2106.0px;height:2.4px;background:#d9dde2;"></div>
<div class="t" id="t82" style="left:1196.0px;top:1639.7px;font-size:33.10px;font-weight:400;color:#0d1730;-webkit-text-stroke:1.32px currentColor;letter-spacing:1.182px;">Statistics</div>
<div class="t" id="t83" style="left:1839.5px;top:1639.7px;font-size:33.10px;font-weight:400;color:#0d1730;-webkit-text-stroke:1.32px currentColor;letter-spacing:0.667px;">Other Info</div>
<div class="t" id="t84" style="left:1216.0px;top:1728.2px;font-size:25.70px;font-weight:400;color:#0d1730;-webkit-text-stroke:1.03px currentColor;letter-spacing:0.366px;">Type</div>
<div class="t" id="t85" style="left:1627.4px;top:1728.2px;font-size:25.70px;font-weight:400;color:#0d1730;-webkit-text-stroke:0.26px currentColor;letter-spacing:0.307px;">categorical</div>
<div class="t" id="t86" style="left:1216.0px;top:1795.0px;font-size:25.70px;font-weight:400;color:#0d1730;-webkit-text-stroke:1.03px currentColor;letter-spacing:0.100px;">Unique values</div>
<div class="t" id="t87" style="left:1627.4px;top:1795.0px;font-size:25.70px;font-weight:400;color:#0d1730;-webkit-text-stroke:0.26px currentColor;">18</div>
<div class="t" id="t88" style="left:1216.0px;top:1862.2px;font-size:25.70px;font-weight:400;color:#0d1730;-webkit-text-stroke:1.03px currentColor;letter-spacing:0.183px;">Percentage of missing values</div>
<div class="t" id="t89" style="left:1627.4px;top:1862.2px;font-size:25.70px;font-weight:400;color:#0d1730;-webkit-text-stroke:0.26px currentColor;letter-spacing:-0.541px;">0%</div>
<div class="t" id="t90" style="left:1216.0px;top:1929.2px;font-size:25.70px;font-weight:400;color:#0d1730;-webkit-text-stroke:1.03px currentColor;letter-spacing:0.275px;">Percentage of empty</div>
<div class="t" id="t91" style="left:1627.4px;top:1929.2px;font-size:25.70px;font-weight:400;color:#0d1730;-webkit-text-stroke:0.26px currentColor;">-</div>
<div class="t" id="t92" style="left:1216.0px;top:1996.2px;font-size:25.70px;font-weight:400;color:#0d1730;-webkit-text-stroke:1.03px currentColor;letter-spacing:0.190px;">Top (most common value)</div>
<div class="t" id="t93" style="left:1627.4px;top:1996.2px;font-size:25.70px;font-weight:400;color:#0d1730;-webkit-text-stroke:0.26px currentColor;letter-spacing:-0.607px;">None</div>
<div class="a" style="left:1195.8px;top:1772.8px;width:578.2px;height:2.5px;background:#e1e4e8;"></div>
<div class="a" style="left:1195.8px;top:1839.8px;width:578.2px;height:2.5px;background:#e1e4e8;"></div>
<div class="a" style="left:1195.8px;top:1906.8px;width:578.2px;height:2.5px;background:#e1e4e8;"></div>
<div class="a" style="left:1195.8px;top:1973.8px;width:578.2px;height:2.5px;background:#e1e4e8;"></div>
<div class="a" style="left:1195.8px;top:2042.0px;width:578.2px;height:2.5px;background:#e1e4e8;"></div>
<div class="t" id="t94" style="left:1216.0px;top:2064.2px;font-size:25.70px;font-weight:400;color:#0d1730;-webkit-text-stroke:1.03px currentColor;letter-spacing:0.162px;">Freq (most common value's</div>
<div class="t" id="t95" style="left:1216.0px;top:2101.0px;font-size:25.70px;font-weight:400;color:#0d1730;-webkit-text-stroke:1.03px currentColor;letter-spacing:0.736px;">frequency)</div>
<div class="t" id="t96" style="left:1627.4px;top:2081.2px;font-size:25.70px;font-weight:400;color:#0d1730;-webkit-text-stroke:0.26px currentColor;letter-spacing:0.123px;">0.26076</div>
<div class="t" id="t97" style="left:1839.6px;top:1712.9px;font-size:25.70px;font-weight:400;color:#0d1730;-webkit-text-stroke:1.03px currentColor;letter-spacing:0.002px;">Predictive Score: 0.13364</div>
<div class="t" id="t98" style="left:1839.6px;top:1764.2px;font-size:25.70px;font-weight:400;color:#0d1730;-webkit-text-stroke:1.03px currentColor;letter-spacing:0.232px;">Missing Value Flag Predictive Score: 0.00000</div>
<svg class="a" style="left:2378px;top:1760px" width="30" height="30" viewBox="0 0 30 30"><circle cx="15" cy="15" r="11.5" fill="none" stroke="#3478f0" stroke-width="2.4"/><path d="M15 13.5 V21" stroke="#3478f0" stroke-width="2.6" stroke-linecap="round"/><circle cx="15" cy="9.3" r="1.6" fill="#3478f0"/></svg>
<div class="a" style="left:1839.6px;top:1821.2px;width:577.8px;height:2.4px;background:#d9dde2;"></div>
<div class="t" id="t99" style="left:2522.4px;top:1615.5px;font-size:26.54px;font-weight:400;color:#0d1730;-webkit-text-stroke:1.06px currentColor;letter-spacing:-0.922px;">CLIENT_PriorApplication_PRODUCT_COMBINATION_with_Highest_</div>
<div class="t" id="t100" style="left:2522.4px;top:1650.9px;font-size:26.54px;font-weight:400;color:#0d1730;-webkit-text-stroke:1.06px currentColor;letter-spacing:-0.599px;">sum_of_PriorApplications_AMT_CREDITs_104w (categorical)</div>
<div class="a" style="left:2522.0px;top:1684.0px;width:780.0px;height:470.0px;background:#e3e6ea;"></div>
<div class="a" style="left:2528.0px;top:1690.5px;width:768.6px;height:463.5px;background:#fff;"></div>
<svg class="a" style="left:2528px;top:1690px;font-family:'Liberation Sans',sans-serif" width="768.6" height="464"><rect x="131" y="11" width="529.5" height="273.70000000000005" fill="#fafafa"/><line x1="131" y1="11.5" x2="660.5" y2="11.5" stroke="#e6e6e6" stroke-width="1"/><rect x="159.45" y="269.00" width="18.7" height="15.70" fill="#64a0e4"/><rect x="186.16" y="225.00" width="18.7" height="59.70" fill="#64a0e4"/><rect x="239.57" y="267.30" width="18.7" height="17.40" fill="#64a0e4"/><rect x="266.27" y="258.00" width="18.7" height="26.70" fill="#64a0e4"/><rect x="292.98" y="268.60" width="18.7" height="16.10" fill="#64a0e4"/><rect x="319.69" y="252.00" width="18.7" height="32.70" fill="#64a0e4"/><rect x="346.39" y="135.00" width="18.7" height="149.70" fill="#64a0e4"/><rect x="373.10" y="188.90" width="18.7" height="95.80" fill="#64a0e4"/><rect x="399.80" y="24.90" width="18.7" height="259.80" fill="#64a0e4"/><rect x="426.51" y="184.20" width="18.7" height="100.50" fill="#64a0e4"/><rect x="453.22" y="252.00" width="18.7" height="32.70" fill="#64a0e4"/><rect x="479.92" y="220.60" width="18.7" height="64.10" fill="#64a0e4"/><rect x="533.33" y="218.50" width="18.7" height="66.20" fill="#64a0e4"/><rect x="560.04" y="268.30" width="18.7" height="16.40" fill="#64a0e4"/><rect x="586.75" y="268.30" width="18.7" height="16.40" fill="#64a0e4"/><rect x="613.45" y="282.80" width="18.7" height="1.90" fill="#64a0e4"/><polyline fill="none" stroke="#d9622b" stroke-width="4.2" stroke-linejoin="round" points="168.1,42.9 194.8,142.4 221.7,101.1 248.6,30.2 275.2,119.1 302.3,26.0 328.6,73.2 355.7,194.9 382.7,153.4 409.1,188.5 436.0,173.0 462.7,177.9 489.5,209.4 516.4,281.0 543.0,126.0 569.5,164.6 596.4,182.6 623.3,135.4"/><clipPath id="pc"><rect x="131" y="-9" width="529.5" height="293.70000000000005"/></clipPath><g clip-path="url(#pc)"><circle cx="168.1" cy="42.9" r="9.6" fill="#fff" stroke="#d9622b" stroke-width="5.2"/><circle cx="194.8" cy="142.4" r="9.6" fill="#fff" stroke="#d9622b" stroke-width="5.2"/><circle cx="221.7" cy="101.1" r="9.6" fill="#fff" stroke="#d9622b" stroke-width="5.2"/><circle cx="248.6" cy="30.2" r="9.6" fill="#fff" stroke="#d9622b" stroke-width="5.2"/><circle cx="275.2" cy="119.1" r="9.6" fill="#fff" stroke="#d9622b" stroke-width="5.2"/><circle cx="302.3" cy="26.0" r="9.6" fill="#fff" stroke="#d9622b" stroke-width="5.2"/><circle cx="328.6" cy="73.2" r="9.6" fill="#fff" stroke="#d9622b" stroke-width="5.2"/><circle cx="355.7" cy="194.9" r="9.6" fill="#fff" stroke="#d9622b" stroke-width="5.2"/><circle cx="382.7" cy="153.4" r="9.6" fill="#fff" stroke="#d9622b" stroke-width="5.2"/><circle cx="409.1" cy="188.5" r="9.6" fill="#fff" stroke="#d9622b" stroke-width="5.2"/><circle cx="436.0" cy="173.0" r="9.6" fill="#fff" stroke="#d9622b" stroke-width="5.2"/><circle cx="462.7" cy="177.9" r="9.6" fill="#fff" stroke="#d9622b" stroke-width="5.2"/><circle cx="489.5" cy="209.4" r="9.6" fill="#fff" stroke="#d9622b" stroke-width="5.2"/><circle cx="516.4" cy="281.0" r="9.6" fill="#fff" stroke="#d9622b" stroke-width="5.2"/><circle cx="543.0" cy="126.0" r="9.6" fill="#fff" stroke="#d9622b" stroke-width="5.2"/><circle cx="569.5" cy="164.6" r="9.6" fill="#fff" stroke="#d9622b" stroke-width="5.2"/><circle cx="596.4" cy="182.6" r="9.6" fill="#fff" stroke="#d9622b" stroke-width="5.2"/><circle cx="623.3" cy="135.4" r="9.6" fill="#fff" stroke="#d9622b" stroke-width="5.2"/></g><line x1="131" y1="11" x2="131" y2="285.70000000000005" stroke="#111" stroke-width="2.2"/><line x1="660.5" y1="11" x2="660.5" y2="285.70000000000005" stroke="#111" stroke-width="2.2"/><line x1="119" y1="284.70000000000005" x2="661.5" y2="284.70000000000005" stroke="#111" stroke-width="2.2"/><line x1="119" y1="284.70" x2="131" y2="284.70" stroke="#111" stroke-width="2"/><text x="108.5" y="291.70" text-anchor="end" font-size="21" fill="#444">0</text><line x1="123.19999999999982" y1="276.71" x2="131" y2="276.71" stroke="#111" stroke-width="2"/><line x1="123.19999999999982" y1="268.72" x2="131" y2="268.72" stroke="#111" stroke-width="2"/><line x1="123.19999999999982" y1="260.73" x2="131" y2="260.73" stroke="#111" stroke-width="2"/><line x1="123.19999999999982" y1="252.74" x2="131" y2="252.74" stroke="#111" stroke-width="2"/><line x1="119" y1="244.75" x2="131" y2="244.75" stroke="#111" stroke-width="2"/><text x="108.5" y="251.75" text-anchor="end" font-size="21" fill="#444">2000</text><line x1="123.19999999999982" y1="236.76" x2="131" y2="236.76" stroke="#111" stroke-width="2"/><line x1="123.19999999999982" y1="228.77" x2="131" y2="228.77" stroke="#111" stroke-width="2"/><line x1="123.19999999999982" y1="220.78" x2="131" y2="220.78" stroke="#111" stroke-width="2"/><line x1="123.19999999999982" y1="212.79" x2="131" y2="212.79" stroke="#111" stroke-width="2"/><line x1="119" y1="204.80" x2="131" y2="204.80" stroke="#111" stroke-width="2"/><text x="108.5" y="211.80" text-anchor="end" font-size="21" fill="#444">4000</text><line x1="123.19999999999982" y1="196.81" x2="131" y2="196.81" stroke="#111" stroke-width="2"/><line x1="123.19999999999982" y1="188.82" x2="131" y2="188.82" stroke="#111" stroke-width="2"/><line x1="123.19999999999982" y1="180.83" x2="131" y2="180.83" stroke="#111" stroke-width="2"/><line x1="123.19999999999982" y1="172.84" x2="131" y2="172.84" stroke="#111" stroke-width="2"/><line x1="119" y1="164.85" x2="131" y2="164.85" stroke="#111" stroke-width="2"/><text x="108.5" y="171.85" text-anchor="end" font-size="21" fill="#444">6000</text><line x1="123.19999999999982" y1="156.86" x2="131" y2="156.86" stroke="#111" stroke-width="2"/><line x1="123.19999999999982" y1="148.87" x2="131" y2="148.87" stroke="#111" stroke-width="2"/><line x1="123.19999999999982" y1="140.88" x2="131" y2="140.88" stroke="#111" stroke-width="2"/><line x1="123.19999999999982" y1="132.89" x2="131" y2="132.89" stroke="#111" stroke-width="2"/><line x1="119" y1="124.90" x2="131" y2="124.90" stroke="#111" stroke-width="2"/><text x="108.5" y="131.90" text-anchor="end" font-size="21" fill="#444">8000</text><line x1="123.19999999999982" y1="116.91" x2="131" y2="116.91" stroke="#111" stroke-width="2"/><line x1="123.19999999999982" y1="108.92" x2="131" y2="108.92" stroke="#111" stroke-width="2"/><line x1="123.19999999999982" y1="100.93" x2="131" y2="100.93" stroke="#111" stroke-width="2"/><line x1="123.19999999999982" y1="92.94" x2="131" y2="92.94" stroke="#111" stroke-width="2"/><line x1="119" y1="84.95" x2="131" y2="84.95" stroke="#111" stroke-width="2"/><text x="108.5" y="91.95" text-anchor="end" font-size="21" fill="#444">10000</text><line x1="123.19999999999982" y1="76.96" x2="131" y2="76.96" stroke="#111" stroke-width="2"/><line x1="123.19999999999982" y1="68.97" x2="131" y2="68.97" stroke="#111" stroke-width="2"/><line x1="123.19999999999982" y1="60.98" x2="131" y2="60.98" stroke="#111" stroke-width="2"/><line x1="123.19999999999982" y1="52.99" x2="131" y2="52.99" stroke="#111" stroke-width="2"/><line x1="119" y1="45.00" x2="131" y2="45.00" stroke="#111" stroke-width="2"/><text x="108.5" y="52.00" text-anchor="end" font-size="21" fill="#444">12000</text><line x1="123.19999999999982" y1="37.01" x2="131" y2="37.01" stroke="#111" stroke-width="2"/><line x1="123.19999999999982" y1="29.02" x2="131" y2="29.02" stroke="#111" stroke-width="2"/><line x1="123.19999999999982" y1="21.03" x2="131" y2="21.03" stroke="#111" stroke-width="2"/><line x1="123.19999999999982" y1="13.04" x2="131" y2="13.04" stroke="#111" stroke-width="2"/><line x1="660.5" y1="279.64" x2="668.8000000000002" y2="279.64" stroke="#111" stroke-width="2"/><line x1="660.5" y1="271.41" x2="668.8000000000002" y2="271.41" stroke="#111" stroke-width="2"/><line x1="660.5" y1="263.17" x2="668.8000000000002" y2="263.17" stroke="#111" stroke-width="2"/><line x1="660.5" y1="254.94" x2="668.8000000000002" y2="254.94" stroke="#111" stroke-width="2"/><line x1="660.5" y1="246.70" x2="672.5999999999999" y2="246.70" stroke="#111" stroke-width="2"/><text x="683" y="253.70" font-size="21" fill="#444">0.04</text><line x1="660.5" y1="238.46" x2="668.8000000000002" y2="238.46" stroke="#111" stroke-width="2"/><line x1="660.5" y1="230.23" x2="668.8000000000002" y2="230.23" stroke="#111" stroke-width="2"/><line x1="660.5" y1="221.99" x2="668.8000000000002" y2="221.99" stroke="#111" stroke-width="2"/><line x1="660.5" y1="213.76" x2="668.8000000000002" y2="213.76" stroke="#111" stroke-width="2"/><line x1="660.5" y1="205.52" x2="672.5999999999999" y2="205.52" stroke="#111" stroke-width="2"/><text x="683" y="212.52" font-size="21" fill="#444">0.06</text><line x1="660.5" y1="197.28" x2="668.8000000000002" y2="197.28" stroke="#111" stroke-width="2"/><line x1="660.5" y1="189.05" x2="668.8000000000002" y2="189.05" stroke="#111" stroke-width="2"/><line x1="660.5" y1="180.81" x2="668.8000000000002" y2="180.81" stroke="#111" stroke-width="2"/><line x1="660.5" y1="172.58" x2="668.8000000000002" y2="172.58" stroke="#111" stroke-width="2"/><line x1="660.5" y1="164.34" x2="672.5999999999999" y2="164.34" stroke="#111" stroke-width="2"/><text x="683" y="171.34" font-size="21" fill="#444">0.08</text><line x1="660.5" y1="156.10" x2="668.8000000000002" y2="156.10" stroke="#111" stroke-width="2"/><line x1="660.5" y1="147.87" x2="668.8000000000002" y2="147.87" stroke="#111" stroke-width="2"/><line x1="660.5" y1="139.63" x2="668.8000000000002" y2="139.63" stroke="#111" stroke-width="2"/><line x1="660.5" y1="131.40" x2="668.8000000000002" y2="131.40" stroke="#111" stroke-width="2"/><line x1="660.5" y1="123.16" x2="672.5999999999999" y2="123.16" stroke="#111" stroke-width="2"/><text x="683" y="130.16" font-size="21" fill="#444">0.1</text><line x1="660.5" y1="114.92" x2="668.8000000000002" y2="114.92" stroke="#111" stroke-width="2"/><line x1="660.5" y1="106.69" x2="668.8000000000002" y2="106.69" stroke="#111" stroke-width="2"/><line x1="660.5" y1="98.45" x2="668.8000000000002" y2="98.45" stroke="#111" stroke-width="2"/><line x1="660.5" y1="90.22" x2="668.8000000000002" y2="90.22" stroke="#111" stroke-width="2"/><line x1="660.5" y1="81.98" x2="672.5999999999999" y2="81.98" stroke="#111" stroke-width="2"/><text x="683" y="88.98" font-size="21" fill="#444">0.12</text><line x1="660.5" y1="73.74" x2="668.8000000000002" y2="73.74" stroke="#111" stroke-width="2"/><line x1="660.5" y1="65.51" x2="668.8000000000002" y2="65.51" stroke="#111" stroke-width="2"/><line x1="660.5" y1="57.27" x2="668.8000000000002" y2="57.27" stroke="#111" stroke-width="2"/><line x1="660.5" y1="49.04" x2="668.8000000000002" y2="49.04" stroke="#111" stroke-width="2"/><line x1="660.5" y1="40.80" x2="672.5999999999999" y2="40.80" stroke="#111" stroke-width="2"/><text x="683" y="47.80" font-size="21" fill="#444">0.14</text><line x1="660.5" y1="32.56" x2="668.8000000000002" y2="32.56" stroke="#111" stroke-width="2"/><line x1="660.5" y1="24.33" x2="668.8000000000002" y2="24.33" stroke="#111" stroke-width="2"/><line x1="660.5" y1="16.09" x2="668.8000000000002" y2="16.09" stroke="#111" stroke-width="2"/><line x1="168.80" y1="284.70000000000005" x2="168.80" y2="296" stroke="#111" stroke-width="2"/><line x1="195.51" y1="284.70000000000005" x2="195.51" y2="296" stroke="#111" stroke-width="2"/><line x1="222.21" y1="284.70000000000005" x2="222.21" y2="296" stroke="#111" stroke-width="2"/><line x1="248.92" y1="284.70000000000005" x2="248.92" y2="296" stroke="#111" stroke-width="2"/><line x1="275.62" y1="284.70000000000005" x2="275.62" y2="296" stroke="#111" stroke-width="2"/><line x1="302.33" y1="284.70000000000005" x2="302.33" y2="296" stroke="#111" stroke-width="2"/><line x1="329.04" y1="284.70000000000005" x2="329.04" y2="296" stroke="#111" stroke-width="2"/><line x1="355.74" y1="284.70000000000005" x2="355.74" y2="296" stroke="#111" stroke-width="2"/><line x1="382.45" y1="284.70000000000005" x2="382.45" y2="296" stroke="#111" stroke-width="2"/><line x1="409.15" y1="284.70000000000005" x2="409.15" y2="296" stroke="#111" stroke-width="2"/><line x1="435.86" y1="284.70000000000005" x2="435.86" y2="296" stroke="#111" stroke-width="2"/><line x1="462.57" y1="284.70000000000005" x2="462.57" y2="296" stroke="#111" stroke-width="2"/><line x1="489.27" y1="284.70000000000005" x2="489.27" y2="296" stroke="#111" stroke-width="2"/><line x1="515.98" y1="284.70000000000005" x2="515.98" y2="296" stroke="#111" stroke-width="2"/><line x1="542.68" y1="284.70000000000005" x2="542.68" y2="296" stroke="#111" stroke-width="2"/><line x1="569.39" y1="284.70000000000005" x2="569.39" y2="296" stroke="#111" stroke-width="2"/><line x1="596.10" y1="284.70000000000005" x2="596.10" y2="296" stroke="#111" stroke-width="2"/><line x1="622.80" y1="284.70000000000005" x2="622.80" y2="296" stroke="#111" stroke-width="2"/><text transform="translate(172.80,313.00) rotate(-56)" text-anchor="end" font-size="21.2" fill="#444">Card Street</text><text transform="translate(199.51,313.00) rotate(-56)" text-anchor="end" font-size="21.2" fill="#444">Card X-Sell</text><text transform="translate(226.21,313.00) rotate(-56)" text-anchor="end" font-size="21.2" fill="#444">Cash</text><text transform="translate(252.92,313.00) rotate(-56)" text-anchor="end" font-size="21.2" fill="#444">Cash Street: high</text><text transform="translate(279.62,313.00) rotate(-56)" text-anchor="end" font-size="21.2" fill="#444">Cash Street: low</text><text transform="translate(306.33,313.00) rotate(-56)" text-anchor="end" font-size="21.2" fill="#444">Cash Street: middle</text><text transform="translate(333.04,313.00) rotate(-56)" text-anchor="end" font-size="21.2" fill="#444">Cash X-Sell: high</text><text transform="translate(359.74,313.00) rotate(-56)" text-anchor="end" font-size="21.2" fill="#444">Cash X-Sell: low</text><text transform="translate(386.45,313.00) rotate(-56)" text-anchor="end" font-size="21.2" fill="#444">Cash X-Sell: middle</text><text transform="translate(413.15,313.00) rotate(-56)" text-anchor="end" font-size="21.2" fill="#444">None</text><text transform="translate(439.86,313.00) rotate(-56)" text-anchor="end" font-size="21.2" fill="#444">POS household with int...</text><text transform="translate(466.57,313.00) rotate(-56)" text-anchor="end" font-size="21.2" fill="#444">POS household without ...</text><text transform="translate(493.27,313.00) rotate(-56)" text-anchor="end" font-size="21.2" fill="#444">POS industry with inte...</text><text transform="translate(519.98,313.00) rotate(-56)" text-anchor="end" font-size="21.2" fill="#444">POS industry without i...</text><text transform="translate(546.68,313.00) rotate(-56)" text-anchor="end" font-size="21.2" fill="#444">POS mobile with interest</text><text transform="translate(573.39,313.00) rotate(-56)" text-anchor="end" font-size="21.2" fill="#444">POS mobile without int...</text><text transform="translate(600.10,313.00) rotate(-56)" text-anchor="end" font-size="21.2" fill="#444">POS other with interest</text><text transform="translate(626.80,313.00) rotate(-56)" text-anchor="end" font-size="21.2" fill="#444">POS others without int...</text><text transform="translate(28,147.70000000000005) rotate(-90)" text-anchor="middle" font-size="20" font-weight="700" fill="#444">Frequency</text><text transform="translate(745,147) rotate(90)" text-anchor="middle" font-size="20" font-weight="700" fill="#d9622b">% Target == 1</text></svg>
<div class="a" style="left:3328px;top:2016px;width:100px;height:100px;border-radius:50%;background:#3b7bea;box-shadow:0 2px 6px rgba(0,0,0,0.15);"></div>
<div class="t" id="t101" style="left:3366.5px;top:2043.8px;font-size:50.98px;font-weight:700;color:#fff;">?</div>
<div class="a" style="left:1985.3px;top:872.2px;width:1399.4px;height:235.6px;background:#e8e8e9;border-radius:16px;"></div>
<svg class="a" style="left:2672px;top:1106px" width="24" height="10" viewBox="0 0 24 10"><path d="M0 0 L12 9 L24 0 Z" fill="#e8e8e9"/></svg>
<div class="t" id="t102" style="left:2006.0px;top:886.1px;font-size:27.65px;font-weight:400;color:#141414;-webkit-text-stroke:0.28px currentColor;letter-spacing:1.259px;">This feature captures the most frequent product combination associated with the highest total credit</div>
<div class="t" id="t103" style="left:2006.0px;top:922.4px;font-size:27.65px;font-weight:400;color:#141414;-webkit-text-stroke:0.28px currentColor;letter-spacing:1.209px;">amounts from prior applications, which is highly relevant for predicting loan default. It reflects the</div>
<div class="t" id="t104" style="left:2006.0px;top:958.7px;font-size:27.65px;font-weight:400;color:#141414;-webkit-text-stroke:0.28px currentColor;letter-spacing:1.239px;">client's historical behavior and preferences in borrowing, which can indicate their likelihood of</div>
<div class="t" id="t105" style="left:2006.0px;top:995.0px;font-size:27.65px;font-weight:400;color:#141414;-webkit-text-stroke:0.28px currentColor;letter-spacing:1.234px;">repayment. Understanding the product combinations that have previously resulted in higher credit</div>
<div class="t" id="t106" style="left:2006.0px;top:1031.3px;font-size:27.65px;font-weight:400;color:#141414;-webkit-text-stroke:0.28px currentColor;letter-spacing:1.177px;">amounts can provide insights into the client's financial habits and risk profile, making it a significant</div>
<div class="t" id="t107" style="left:2006.0px;top:1067.6px;font-size:27.65px;font-weight:400;color:#141414;-webkit-text-stroke:0.28px currentColor;letter-spacing:1.344px;">predictor of future loan performance.</div>
</body></html>
